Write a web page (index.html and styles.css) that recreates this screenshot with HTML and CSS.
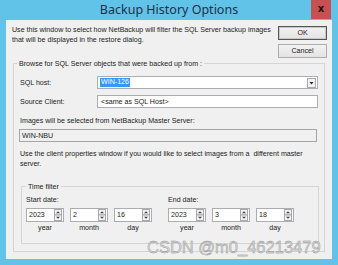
FILE: index.html
```html
<!DOCTYPE html>
<html>
<head>
<meta charset="utf-8">
<link rel="stylesheet" href="styles.css">
</head>
<body>
<div class="window">
  <div class="titlebar">
    <span class="title">Backup History Options</span>
    <span class="close">x</span>
  </div>
  <div class="client">
    <div class="top">
      <p class="desc">Use this window to select how NetBackup will filter the SQL Server backup images<br>that will be displayed in the restore dialog.</p>
      <div class="buttons">
        <div class="btn default">OK</div>
        <div class="btn">Cancel</div>
      </div>
    </div>
    <div class="group outer">
      <span class="legend">Browse for SQL Server objects that were backed up from :</span>
      <div class="row first">
        <span class="label">SQL host:</span>
        <div class="combo">
          <span class="sel">WIN-126</span>
          <svg class="drop" width="9" height="10" viewBox="0 0 9 10"><rect x="0.5" y="0.5" width="8" height="9" fill="#f2f2f2" stroke="#a8a8a8"/><polygon points="2.5,4 6.5,4 4.5,6.5" fill="#222"/></svg>
        </div>
      </div>
      <div class="row second">
        <span class="label">Source Client:</span>
        <div class="textbox">&lt;same as SQL Host&gt;</div>
      </div>
      <p class="info">Images will be selected from NetBackup Master Server:</p>
      <div class="textbox readonly">WIN-NBU</div>
      <p class="info2">Use the client properties window if you would like to select images from a &nbsp;different master<br>server.</p>
      <div class="group inner">
        <span class="legend">Time filter</span>
        <div class="dates">
          <div class="datecol">
            <p class="dlabel">Start date:</p>
            <div class="spins">
              <div class="spinwrap"><div class="spin"><span>2023</span><svg width="8" height="12" viewBox="0 0 8 12"><rect x="0.5" y="0.5" width="7" height="5.5" fill="#f2f2f2" stroke="#a8a8a8"/><rect x="0.5" y="6" width="7" height="5.5" fill="#f2f2f2" stroke="#a8a8a8"/><polygon points="2,4.3 4,2.3 6,4.3" fill="#444"/><polygon points="2,7.7 4,9.7 6,7.7" fill="#444"/></svg></div><p class="unit">year</p></div>
              <div class="spinwrap"><div class="spin"><span>2</span><svg width="8" height="12" viewBox="0 0 8 12"><rect x="0.5" y="0.5" width="7" height="5.5" fill="#f2f2f2" stroke="#a8a8a8"/><rect x="0.5" y="6" width="7" height="5.5" fill="#f2f2f2" stroke="#a8a8a8"/><polygon points="2,4.3 4,2.3 6,4.3" fill="#444"/><polygon points="2,7.7 4,9.7 6,7.7" fill="#444"/></svg></div><p class="unit">month</p></div>
              <div class="spinwrap"><div class="spin"><span>16</span><svg width="8" height="12" viewBox="0 0 8 12"><rect x="0.5" y="0.5" width="7" height="5.5" fill="#f2f2f2" stroke="#a8a8a8"/><rect x="0.5" y="6" width="7" height="5.5" fill="#f2f2f2" stroke="#a8a8a8"/><polygon points="2,4.3 4,2.3 6,4.3" fill="#444"/><polygon points="2,7.7 4,9.7 6,7.7" fill="#444"/></svg></div><p class="unit">day</p></div>
            </div>
          </div>
          <div class="datecol">
            <p class="dlabel">End date:</p>
            <div class="spins">
              <div class="spinwrap"><div class="spin"><span>2023</span><svg width="8" height="12" viewBox="0 0 8 12"><rect x="0.5" y="0.5" width="7" height="5.5" fill="#f2f2f2" stroke="#a8a8a8"/><rect x="0.5" y="6" width="7" height="5.5" fill="#f2f2f2" stroke="#a8a8a8"/><polygon points="2,4.3 4,2.3 6,4.3" fill="#444"/><polygon points="2,7.7 4,9.7 6,7.7" fill="#444"/></svg></div><p class="unit">year</p></div>
              <div class="spinwrap"><div class="spin"><span>3</span><svg width="8" height="12" viewBox="0 0 8 12"><rect x="0.5" y="0.5" width="7" height="5.5" fill="#f2f2f2" stroke="#a8a8a8"/><rect x="0.5" y="6" width="7" height="5.5" fill="#f2f2f2" stroke="#a8a8a8"/><polygon points="2,4.3 4,2.3 6,4.3" fill="#444"/><polygon points="2,7.7 4,9.7 6,7.7" fill="#444"/></svg></div><p class="unit">month</p></div>
              <div class="spinwrap"><div class="spin"><span>18</span><svg width="8" height="12" viewBox="0 0 8 12"><rect x="0.5" y="0.5" width="7" height="5.5" fill="#f2f2f2" stroke="#a8a8a8"/><rect x="0.5" y="6" width="7" height="5.5" fill="#f2f2f2" stroke="#a8a8a8"/><polygon points="2,4.3 4,2.3 6,4.3" fill="#444"/><polygon points="2,7.7 4,9.7 6,7.7" fill="#444"/></svg></div><p class="unit">day</p></div>
            </div>
          </div>
        </div>
      </div>
    </div>
    <span class="watermark">CSDN @m0_46213479</span>
  </div>
</div>
</body>
</html>
```
FILE: styles.css
```css
* { box-sizing: border-box; margin: 0; padding: 0; }
html, body { width: 338px; height: 265px; overflow: hidden; }
body {
  font-family: "Liberation Sans", Arial, sans-serif;
  font-size: 7.1px;
  line-height: 10px;
  color: #222;
  background: #62c3e8;
}
.window {
  width: 338px;
  height: 265px;
  background: #62c3e8;
  padding: 0 6px 6px;
  display: flex;
  flex-direction: column;
}
.titlebar {
  height: 20px;
  flex: none;
  display: flex;
  align-items: center;
  justify-content: center;
  position: relative;
}
.title {
  font-family: "Noto Sans", "Open Sans", sans-serif;
  font-size: 12.5px;
  line-height: 20px;
  color: #1c3048;
}
.close {
  position: absolute;
  right: 1px;
  top: 0;
  width: 20px;
  height: 19px;
  background: #c75050;
  color: #1e1010;
  font-family: "DejaVu Sans", sans-serif;
  font-weight: bold;
  font-size: 10px;
  line-height: 17px;
  text-align: center;
}
.client {
  flex: 1;
  background: #f0f0f0;
  position: relative;
  display: flex;
  flex-direction: column;
}
.top {
  height: 43px;
  flex: none;
  display: flex;
  justify-content: space-between;
  padding: 5px 5px 0 6px;
}
.desc { white-space: nowrap; }
.buttons {
  display: flex;
  flex-direction: column;
  gap: 4px;
  padding-top: 1px;
}
.btn {
  width: 49px;
  height: 14px;
  border: 1px solid #adadad;
  background: linear-gradient(#f2f2f2, #e3e3e3);
  text-align: center;
  line-height: 12px;
}
.btn.default {
  border-color: #555;
  box-shadow: inset 0 0 0 1px #c8c8c8;
}
.group {
  border: 1px solid #d5d5d5;
  display: flex;
  flex-direction: column;
}
.group.outer {
  margin: 0 7px 0 7px;
  height: 189px;
  padding: 0 6px 0 6px;
}
.legend {
  display: block;
  width: fit-content;
  margin-top: -5px;
  margin-left: -3px;
  padding: 0 2px;
  background: #f0f0f0;
  white-space: nowrap;
}
.row {
  display: flex;
  align-items: center;
  height: 13px;
}
.row.first { margin-top: 7px; }
.row.second { margin-top: 6px; }
.label { width: 77px; flex: none; }
.combo, .textbox {
  height: 13px;
  border: 1px solid #abadb3;
  background: #fff;
  display: flex;
  align-items: center;
  padding-left: 2px;
}
.combo {
  width: 221px;
  justify-content: space-between;
  padding-right: 1px;
}
.row .textbox { width: 221px; padding-left: 3px; }
.sel {
  background: #3399ff;
  color: #fff;
  padding: 0 1px;
  line-height: 9px;
}
.drop { display: block; }
.info { margin-top: 8px; }
.textbox.readonly {
  margin-top: 3px;
  margin-left: -1px;
  width: 298px;
  background: #f0f0f0;
  border-color: #a5a5a5;
}
.info2 { margin-top: 7px; white-space: nowrap; }
.group.inner {
  margin-top: 17px;
  margin-left: 1px;
  width: 298px;
  padding: 0 0 10px 4px;
}
.group.inner .legend { margin-left: 0; }
.dates {
  display: flex;
  gap: 16px;
}
.dlabel { margin-top: 3px; }
.spins {
  display: flex;
  gap: 6px;
  margin-top: 3px;
}
.spinwrap { width: 38px; }
.spin {
  height: 14px;
  border: 1px solid #abadb3;
  background: #fff;
  display: flex;
  align-items: center;
  justify-content: space-between;
  padding: 0 1px 0 2px;
}
.spin svg { display: block; }
.unit {
  margin-top: 1px;
  text-align: center;
}
.watermark {
  position: absolute;
  left: 141px;
  top: 217px;
  font-family: "Liberation Sans", Arial, sans-serif;
  font-size: 16.5px;
  line-height: 20px;
  color: #dadada;
  -webkit-text-stroke: 0.4px #8c8c8c;
  white-space: nowrap;
}
```
